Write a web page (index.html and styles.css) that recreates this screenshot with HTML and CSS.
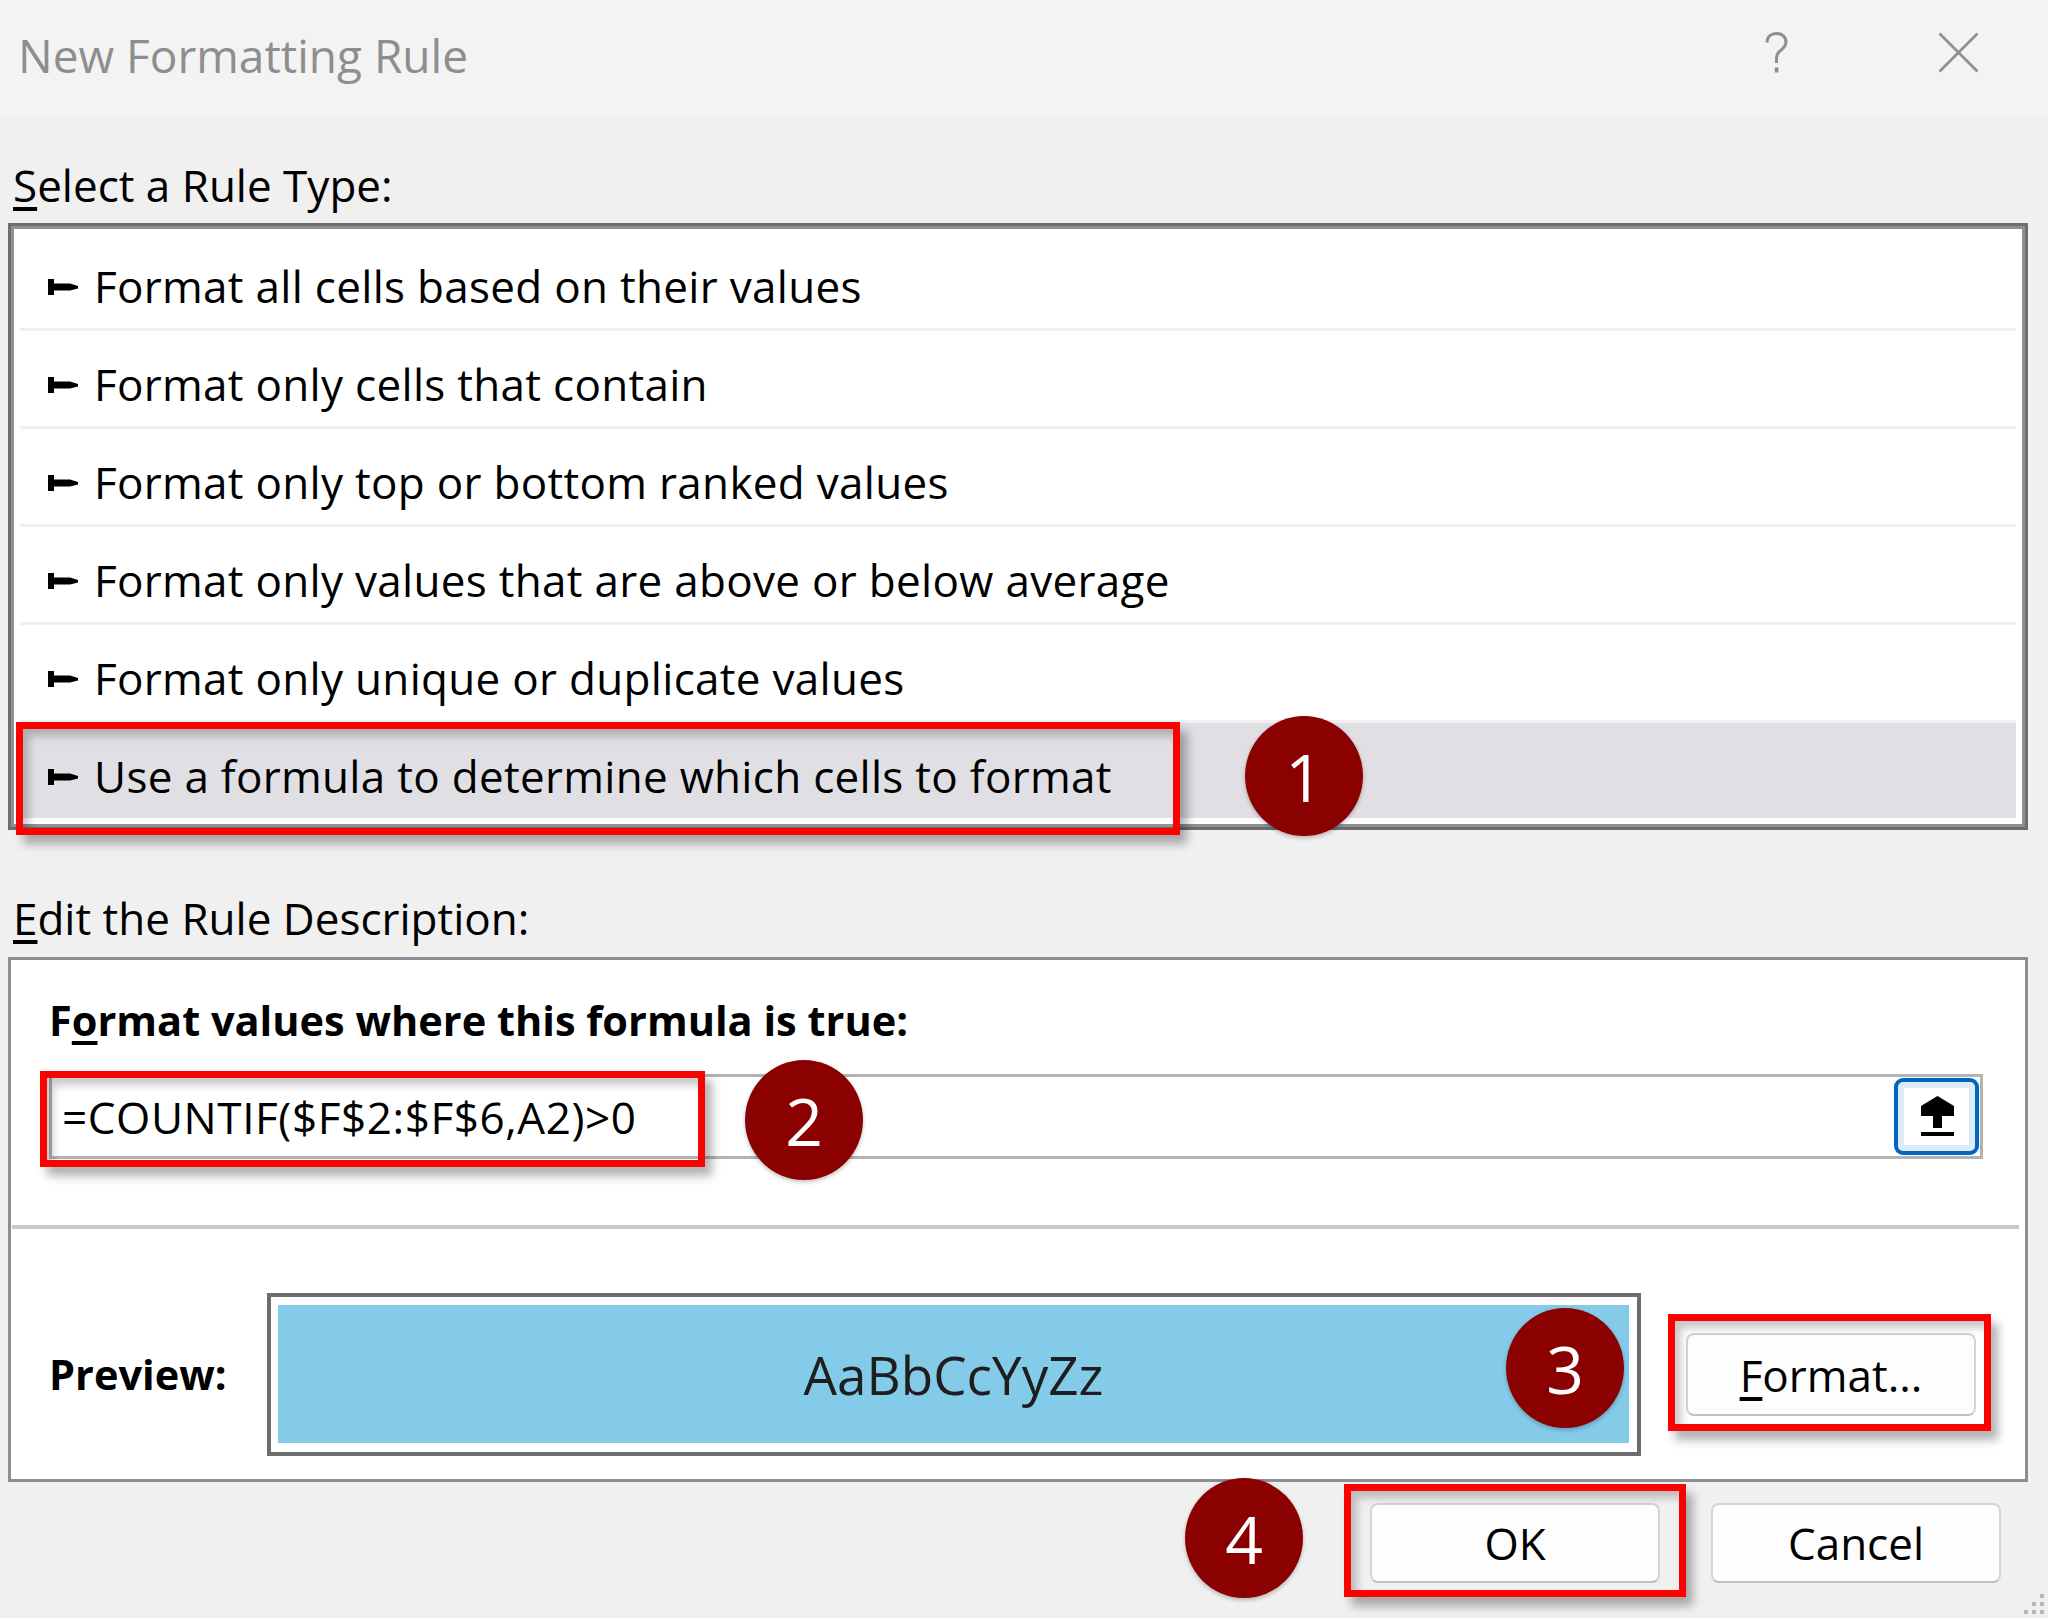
FILE: index.html
```html
<!DOCTYPE html>
<html lang="en">
<head>
<meta charset="utf-8">
<title>New Formatting Rule</title>
<link rel="stylesheet" href="styles.css">
</head>
<body>
<div class="dialog">
  <header class="titlebar">
    <span class="title">New Formatting Rule</span>
    <svg class="help" viewBox="0 0 23 41" aria-hidden="true">
      <path d="M2 10.5 C2 4.5 6 1.5 11.5 1.5 C17 1.5 21 5 21 10 C21 14.5 18 16.5 15 19 C12.5 21 11.5 23 11.5 27 V31" fill="none" stroke="#8e8e8e" stroke-width="3"/>
      <rect x="9.8" y="35.5" width="3.6" height="5" fill="#8e8e8e"/>
    </svg>
    <svg class="close" viewBox="0 0 41 41" aria-hidden="true">
      <path d="M1.5 1.5 L39.5 39.5 M39.5 1.5 L1.5 39.5" stroke="#8e8e8e" stroke-width="2.6"/>
    </svg>
  </header>

  <main class="content">
    <div class="label label-rule"><u>S</u>elect a Rule Type:</div>
    <ul class="listbox">
      <li class="rule"><svg class="bullet" viewBox="0 0 35 16"><rect x="3" y="0" width="6" height="16"/><polygon points="9,4.5 25,4.5 33,7 33,9.5 25,11.5 9,11.5"/></svg><span>Format all cells based on their values</span></li>
      <li class="rule"><svg class="bullet" viewBox="0 0 35 16"><rect x="3" y="0" width="6" height="16"/><polygon points="9,4.5 25,4.5 33,7 33,9.5 25,11.5 9,11.5"/></svg><span>Format only cells that contain</span></li>
      <li class="rule"><svg class="bullet" viewBox="0 0 35 16"><rect x="3" y="0" width="6" height="16"/><polygon points="9,4.5 25,4.5 33,7 33,9.5 25,11.5 9,11.5"/></svg><span>Format only top or bottom ranked values</span></li>
      <li class="rule"><svg class="bullet" viewBox="0 0 35 16"><rect x="3" y="0" width="6" height="16"/><polygon points="9,4.5 25,4.5 33,7 33,9.5 25,11.5 9,11.5"/></svg><span>Format only values that are above or below average</span></li>
      <li class="rule"><svg class="bullet" viewBox="0 0 35 16"><rect x="3" y="0" width="6" height="16"/><polygon points="9,4.5 25,4.5 33,7 33,9.5 25,11.5 9,11.5"/></svg><span>Format only unique or duplicate values</span></li>
      <li class="rule selected"><svg class="bullet" viewBox="0 0 35 16"><rect x="3" y="0" width="6" height="16"/><polygon points="9,4.5 25,4.5 33,7 33,9.5 25,11.5 9,11.5"/></svg><span>Use a formula to determine which cells to format</span></li>
    </ul>

    <div class="label label-edit"><u>E</u>dit the Rule Description:</div>
    <section class="desc">
      <div class="desc-title">F<u>o</u>rmat values where this formula is true:</div>
      <div class="formula">
        <span class="formula-text">=COUNTIF($F$2:$F$6,A2)&gt;0</span>
        <button class="collapse" type="button" aria-label="Collapse dialog">
          <svg viewBox="0 0 33 40" width="33" height="40">
            <polygon points="16.5,0 33,10 33,20 21,20 21,32 12,32 12,20 0,20 0,10" fill="#000"/>
            <rect x="0" y="36" width="33" height="4" fill="#000"/>
          </svg>
        </button>
      </div>
      <hr class="sep">
      <div class="preview-row">
        <span class="preview-label">Preview:</span>
        <div class="preview-box"><div class="preview-fill">AaBbCcYyZz</div></div>
        <button class="btn btn-format" type="button"><u>F</u>ormat...</button>
      </div>
    </section>

    <div class="actions">
      <button class="btn btn-action" type="button">OK</button>
      <button class="btn btn-action" type="button">Cancel</button>
    </div>
  </main>

  <div class="mark mark-1"></div>
  <div class="badge badge-1">1</div>
  <div class="mark mark-2"></div>
  <div class="badge badge-2">2</div>
  <div class="mark mark-3"></div>
  <div class="badge badge-3">3</div>
  <div class="mark mark-4"></div>
  <div class="badge badge-4">4</div>

  <svg class="grip" viewBox="0 0 26 26" aria-hidden="true">
    <rect x="20" y="4" width="4" height="4"/>
    <rect x="12" y="12" width="4" height="4"/>
    <rect x="20" y="12" width="4" height="4"/>
    <rect x="4" y="20" width="4" height="4"/>
    <rect x="12" y="20" width="4" height="4"/>
    <rect x="20" y="20" width="4" height="4"/>
  </svg>
</div>
</body>
</html>
```

FILE: styles.css
```css
html, body {
  margin: 0;
  padding: 0;
}

body {
  background: #f0f0f0;
  font-family: "Open Sans", "Noto Sans", sans-serif;
  color: #000;
}

.dialog {
  position: relative;
  width: 2048px;
  height: 1618px;
  overflow: hidden;
}

/* Title bar */
.titlebar {
  height: 117px;
  box-sizing: border-box;
  background: #f3f3f3;
  display: flex;
  align-items: flex-start;
  padding: 0 69px 0 18px;
}

.title {
  font-size: 46px;
  line-height: 60px;
  margin-top: 25px;
  color: #8e8e8e;
}

.help {
  margin-left: auto;
  margin-top: 32px;
  width: 23px;
  height: 41px;
}

.close {
  margin-left: 150px;
  margin-top: 32px;
  width: 41px;
  height: 41px;
}

/* Content */
.content {
  padding: 0 20px 0 8px;
}

.label {
  font-size: 44px;
  line-height: 60px;
  padding-left: 5px;
}

.label-rule {
  margin-top: 38px;
}

.label-edit {
  margin-top: 58px;
}

u {
  text-decoration-thickness: 4px;
  text-underline-offset: 5px;
}

/* Rule list */
.listbox {
  list-style: none;
  margin: 8px 0 0;
  border: 3px solid #6e6e6e;
  box-shadow: inset 0 0 0 3px #8c9099;
  background: #fff;
  padding: 7px 9px 9px 9px;
}

.rule {
  height: 98px;
  box-sizing: border-box;
  padding: 13px 0 0 25px;
  display: flex;
  align-items: center;
  font-size: 44px;
  line-height: 60px;
  letter-spacing: 0.3px;
  border-bottom: 3px solid #f0f0f0;
}

.rule:last-child {
  height: 95px;
  border-bottom: 0;
}

.rule.selected {
  background: #dfdfe4;
}

.rule span {
  margin-top: -2px;
}

.bullet {
  width: 35px;
  height: 16px;
  margin-right: 14px;
  flex: none;
  fill: #000;
}

/* Description */
.desc {
  margin-top: 9px;
  border: 3px solid #8b8e95;
  background: #fff;
  padding: 32px 42px 23px 38px;
}

.desc-title {
  font-weight: 700;
  font-size: 41.5px;
  line-height: 57px;
}

.formula {
  margin-top: 25px;
  height: 85px;
  box-sizing: border-box;
  border: 3px solid #b3b3b3;
  display: flex;
  align-items: center;
  padding: 0 1px 0 10px;
}

.formula-text {
  flex: 1;
  font-size: 44px;
  line-height: 60px;
  letter-spacing: 0.6px;
}

.collapse {
  width: 85px;
  height: 77px;
  box-sizing: border-box;
  border: 4px solid #0067c0;
  border-radius: 9px;
  background: #fff;
  box-shadow: inset 0 0 0 6px #dfebf7;
  padding: 0 0 2px 2px;
  display: flex;
  align-items: center;
  justify-content: center;
}

.sep {
  margin: 66px -36px 0 -37px;
  height: 4px;
  border: 0;
  background: #c9c9c9;
}

.preview-row {
  margin-top: 64px;
  display: flex;
  align-items: center;
}

.preview-label {
  width: 218px;
  flex: none;
  font-weight: 700;
  font-size: 41.5px;
  line-height: 57px;
}

.preview-box {
  width: 1374px;
  height: 163px;
  flex: none;
  box-sizing: border-box;
  border: 4px solid #6d6d6d;
  padding: 8px 8px 9px 7px;
  background: #fff;
}

.preview-fill {
  height: 100%;
  background: #84cbea;
  display: flex;
  align-items: center;
  justify-content: center;
  font-size: 53px;
  color: #1e1e1e;
}

/* Buttons */
.btn {
  width: 290px;
  box-sizing: border-box;
  font-family: inherit;
  font-size: 44px;
  line-height: 60px;
  color: #000;
  background: #fdfdfd;
  border: 2px solid #d4d4d4;
  border-bottom-color: #c0c0c0;
  border-radius: 8px;
  padding: 0;
}

.btn-format {
  height: 83px;
  margin-left: 45px;
}

.actions {
  display: flex;
  justify-content: flex-end;
  gap: 51px;
  margin-top: 21px;
  padding-right: 27px;
}

.btn-action {
  height: 80px;
}

/* Annotations */
.mark {
  position: absolute;
  box-sizing: border-box;
  border: 7px solid #ff0000;
  box-shadow: 7px 9px 9px rgba(0, 0, 0, 0.3), inset 6px 7px 8px rgba(0, 0, 0, 0.22);
}

.mark-1 { left: 16px; top: 722px; width: 1164px; height: 113px; }
.mark-2 { left: 40px; top: 1071px; width: 665px; height: 96px; }
.mark-3 { left: 1668px; top: 1314px; width: 323px; height: 117px; }
.mark-4 { left: 1344px; top: 1484px; width: 342px; height: 113px; }

.badge {
  position: absolute;
  width: 118px;
  height: 120px;
  border-radius: 50%;
  background: #8b0000;
  color: #fff;
  font-size: 66px;
  line-height: 1;
  display: flex;
  align-items: center;
  justify-content: center;
  box-shadow: 0 2px 4px rgba(0, 0, 0, 0.25);
}

.badge-1 { left: 1245px; top: 716px; }
.badge-2 { left: 745px; top: 1060px; }
.badge-3 { left: 1506px; top: 1308px; }
.badge-4 { left: 1185px; top: 1478px; }

.grip {
  position: absolute;
  right: 2px;
  bottom: 2px;
  width: 26px;
  height: 26px;
  fill: #b9b9b9;
}
```
